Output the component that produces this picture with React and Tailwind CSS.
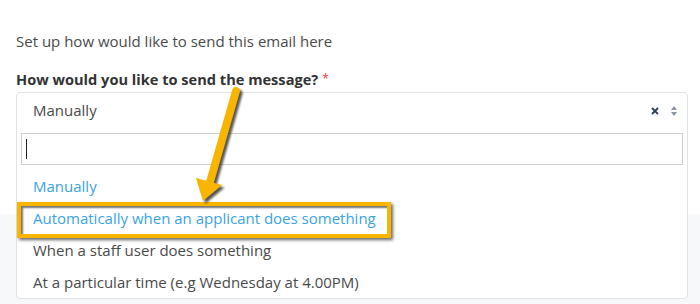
import React from 'react';

const options = [
  { label: 'Manually', active: true },
  { label: 'Automatically when an applicant does something', active: true, highlight: true },
  { label: 'When a staff user does something' },
  { label: 'At a particular time (e.g Wednesday at 4.00PM)' },
];

const Arrow = () => (
  <svg className="absolute left-0 top-0 pointer-events-none" width="700" height="304" viewBox="0 0 700 304">
    <defs>
      <filter id="blur" x="-20%" y="-20%" width="140%" height="140%">
        <feGaussianBlur stdDeviation="1.2" />
      </filter>
    </defs>
    <g transform="translate(2.5 2.5)" fill="#1f1f1f" stroke="#1f1f1f" opacity="0.75" filter="url(#blur)">
      <line x1="236" y1="91" x2="210" y2="182" strokeWidth="8" strokeLinecap="round" />
      <polygon points="203,201 196,178 222,185" strokeWidth="0" />
    </g>
    <g fill="#f7b500" stroke="#f7b500">
      <line x1="236" y1="91" x2="210" y2="182" strokeWidth="8" strokeLinecap="round" />
      <polygon points="203,201 196,178 222,185" strokeWidth="0" />
    </g>
  </svg>
);

export default function App() {
  return (
    <div
      className="relative w-[700px] h-[304px] overflow-hidden bg-[linear-gradient(to_bottom,#ffffff_214px,#f7f8fa_214px)] text-[15px]"
      style={{ fontFamily: '"Open Sans", "Liberation Sans", sans-serif' }}
    >
      <div className="px-4 pt-[31px]">
        <p className="text-[#4a4a4a] leading-5">Set up how would like to send this email here</p>
        <div className="mt-[18px] font-bold text-[14.6px] text-[#333333] leading-5">
          How would you like to send the message?
          <span className="text-[#e53935] font-normal ml-1 text-[12px] align-top">*</span>
        </div>

        <div className="mt-[3px] w-[672px] border border-[#dde3e8] rounded-[4px] bg-white">
          <div className="h-[40px] pb-[5px] flex items-center pl-4 pr-[10px] text-[#4a4a4a]">
            <span className="flex-1">Manually</span>
            <svg className="mr-[12px]" width="8" height="8" viewBox="0 0 8 8">
              <path d="M1 1 L7 7 M7 1 L1 7" stroke="#2c3e50" strokeWidth="1.8" />
            </svg>
            <span className="flex flex-col items-center gap-[2px] text-[#8a95a0]">
              <svg width="6" height="4" viewBox="0 0 6 4"><polygon points="3,0 6,4 0,4" fill="currentColor" /></svg>
              <svg width="6" height="4" viewBox="0 0 6 4"><polygon points="0,0 6,0 3,4" fill="currentColor" /></svg>
            </span>
          </div>
          <div className="mx-1 h-[32px] border-[1.5px] border-[#cfcfcf] flex items-center pl-1">
            <div className="w-px h-[20px] bg-[#222]" />
          </div>
          <div className="pt-[5px]">
            {options.map((o) => (
              <div
                key={o.label}
                className={`relative h-8 flex items-center pl-4 ${o.active ? 'text-[#3aa3e3]' : 'text-[#4a4a4a]'}`}
              >
                {o.label}
                {o.highlight && (
                  <div className="absolute left-0 top-0 w-[374px] h-[36px] border-4 border-[#f7b500] shadow-[2px_2px_3px_rgba(0,0,0,0.6),inset_2px_2px_2px_rgba(0,0,0,0.55)]" />
                )}
              </div>
            ))}
          </div>
        </div>
      </div>
      <Arrow />
    </div>
  );
}
